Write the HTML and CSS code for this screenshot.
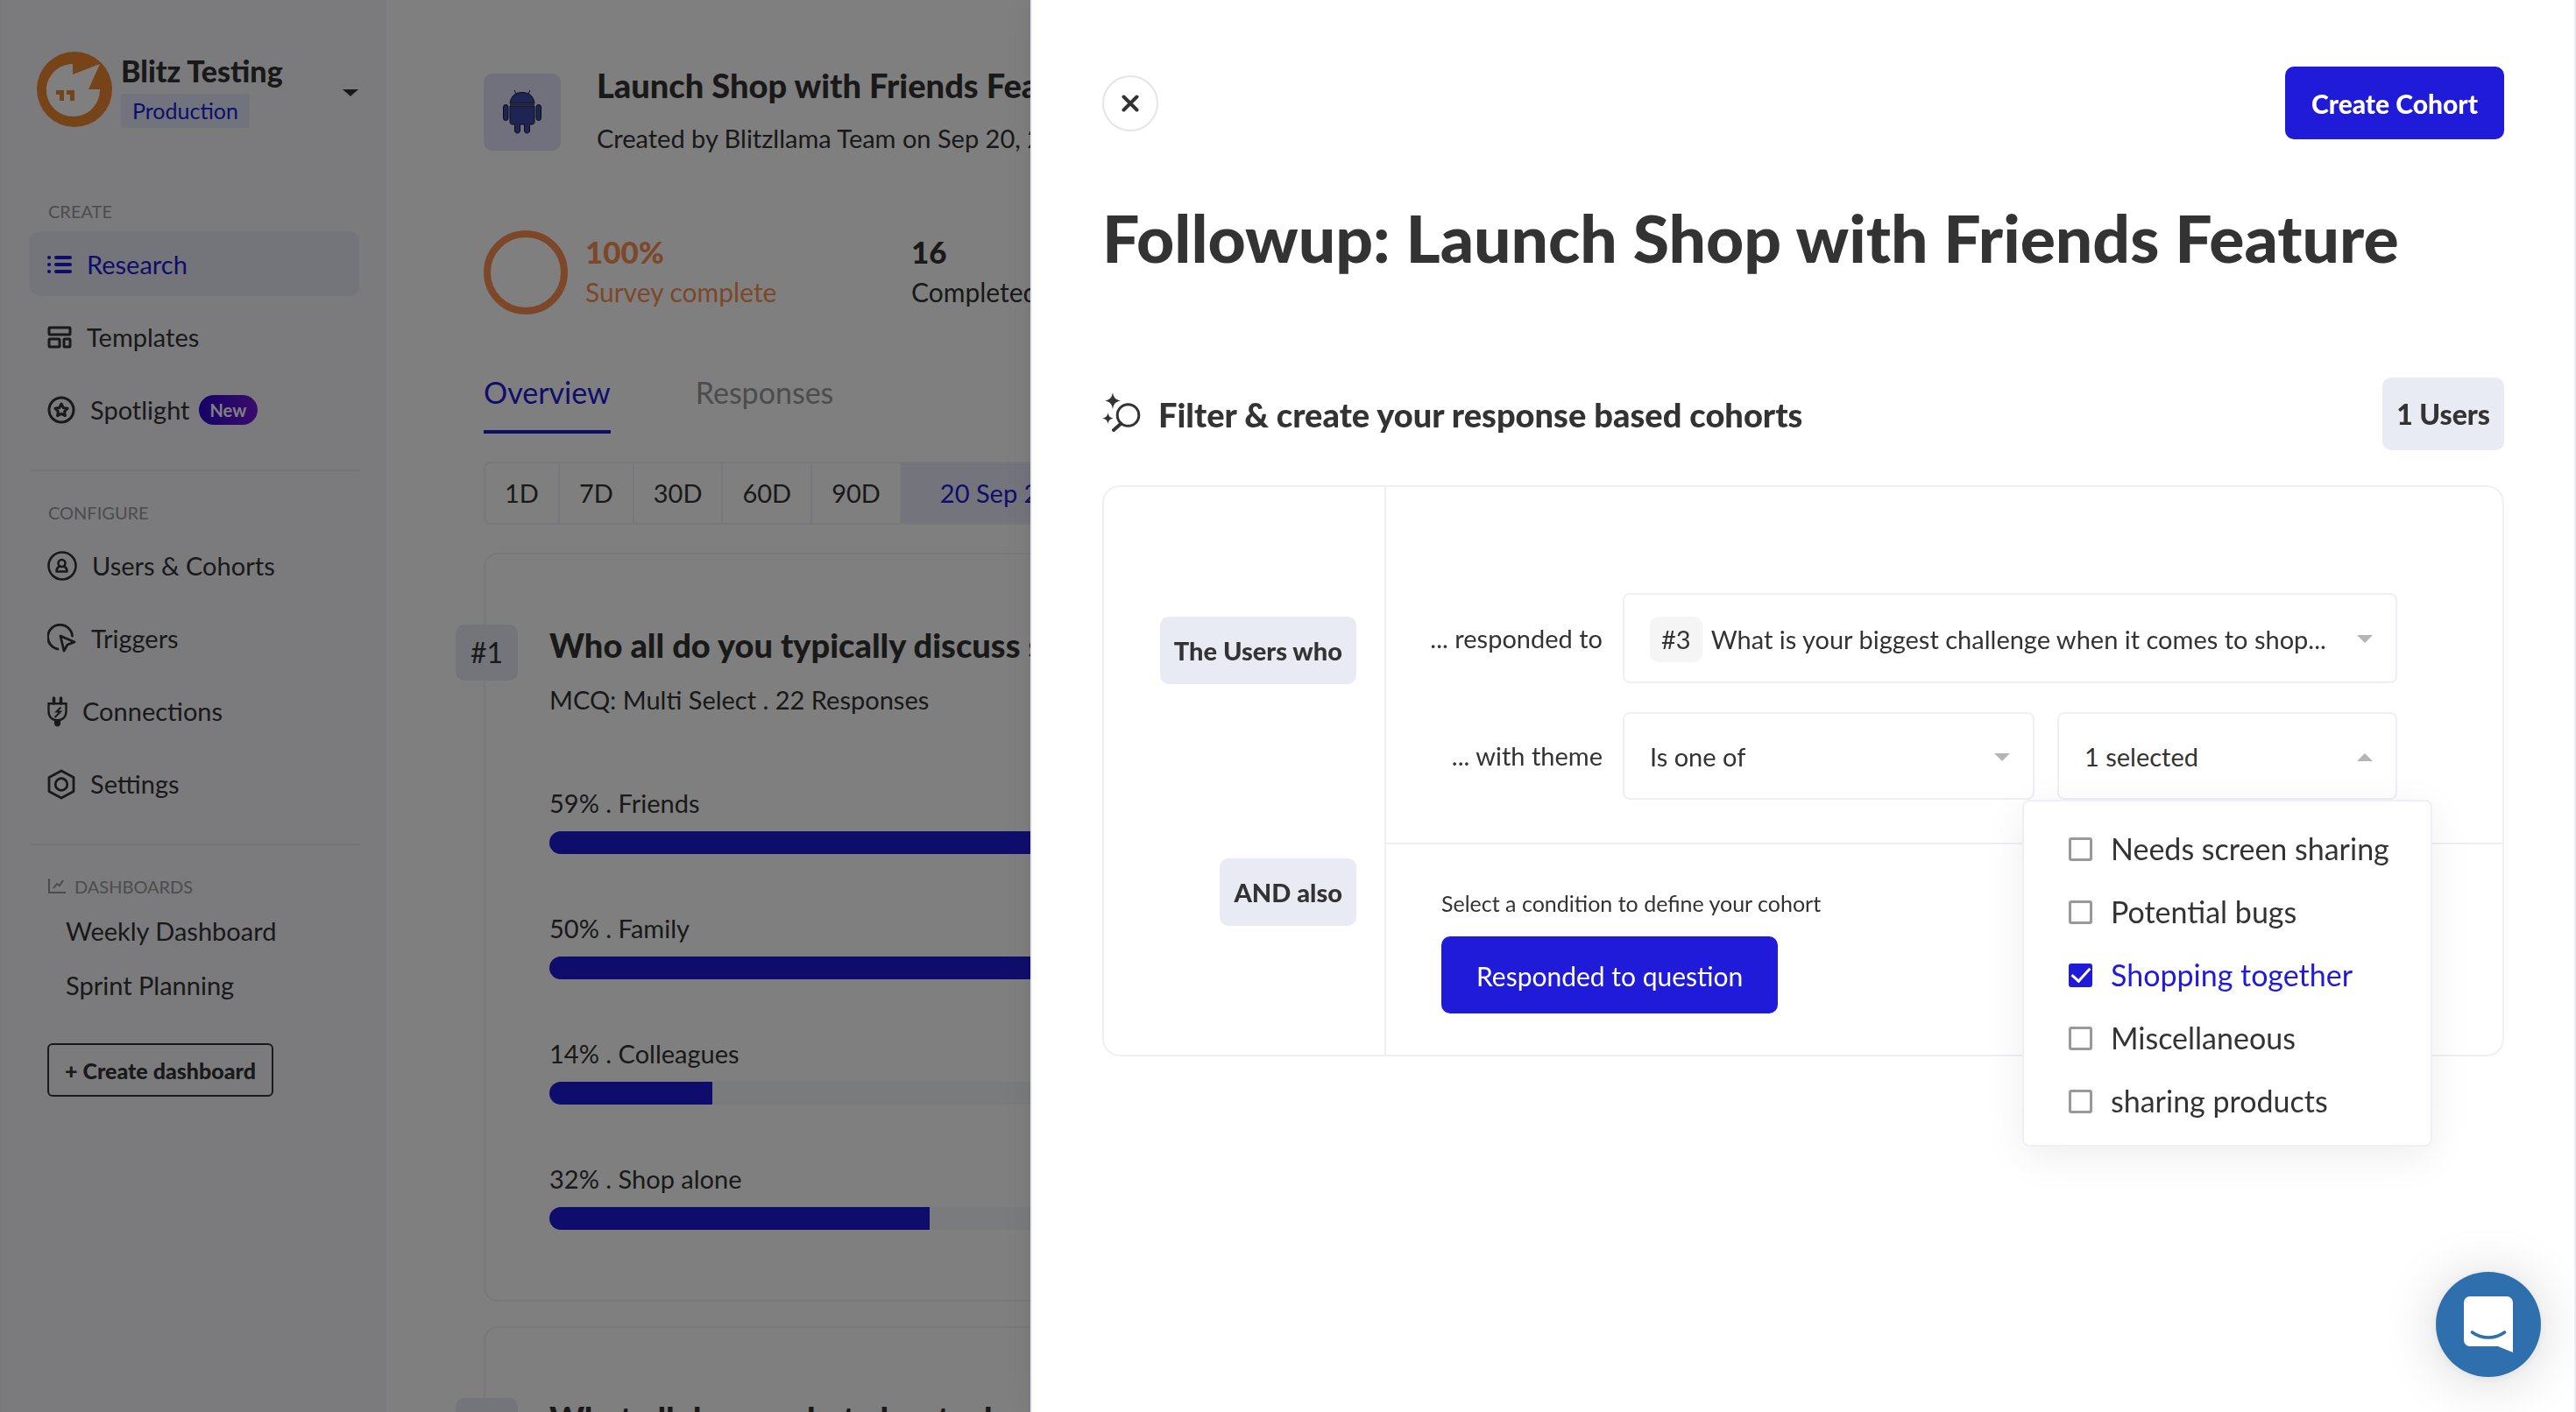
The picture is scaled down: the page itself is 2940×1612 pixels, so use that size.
FILE: index.html
```html
<!DOCTYPE html>
<html lang="en">
<head>
<meta charset="utf-8">
<title>Blitz Testing – Create Cohort</title>
<meta name="viewport" content="width=device-width, initial-scale=1">
<link rel="stylesheet" href="styles.css">
</head>
<body>
<div class="app">
  <nav class="sidebar" aria-label="Main">
    <div class="brand">
      <svg class="brand-logo" viewBox="0 0 86 86" aria-hidden="true">
        <circle cx="43" cy="43" r="43" fill="#ee8631"/>
        <path d="M41 14v12l31-12-13 29h13c0 17-13 31-30 31S11 61 11 44c0-16 13-30 30-30z" fill="#fff"/>
        <path d="M22 44h9v12h-5v-7h-4zM34 44h9v12h-5v-7h-4z" fill="#ee8631"/>
      </svg>
      <div class="brand-text">
        <span class="brand-name">Blitz Testing</span>
        <span class="brand-env">Production</span>
      </div>
      <button class="brand-toggle" type="button" aria-label="Switch workspace">
        <svg width="18" height="8" viewBox="0 0 18 8"><path d="M0 0h18L9 8z" fill="currentColor"/></svg>
      </button>
    </div>

    <h2 class="nav-heading">CREATE</h2>
    <ul class="nav-list">
      <li><a class="nav-item is-active" href="#">
        <svg width="28" height="24" viewBox="0 0 28 24" stroke="currentColor" stroke-width="4" stroke-linecap="round"><path d="M2 4h.1M2 12h.1M2 20h.1M10 4h16M10 12h16M10 20h16"/></svg>
        Research</a></li>
      <li><a class="nav-item" href="#">
        <svg width="28" height="26" viewBox="0 0 28 26" fill="none" stroke="currentColor" stroke-width="3"><rect x="2" y="2" width="24" height="8" rx="1"/><rect x="2" y="15" width="12" height="9" rx="1"/><rect x="19" y="15" width="7" height="9" rx="1"/></svg>
        Templates</a></li>
      <li><a class="nav-item" href="#">
        <svg width="32" height="32" viewBox="0 0 32 32" fill="none" stroke="currentColor" stroke-width="3" stroke-linejoin="round"><circle cx="16" cy="16" r="14"/><path d="M16 9l2.200 4.500 4.900.7-3.500 3.500.8 4.900-4.400-2.300-4.400 2.300.8-4.900-3.500-3.500 4.900-.7z"/></svg>
        Spotlight <span class="pill">New</span></a></li>
    </ul>

    <hr class="nav-rule">

    <h2 class="nav-heading">CONFIGURE</h2>
    <ul class="nav-list">
      <li><a class="nav-item" href="#">
        <svg width="34" height="34" viewBox="0 0 34 34" fill="none" stroke="currentColor" stroke-width="2.600" stroke-linejoin="round"><circle cx="17" cy="17" r="15.500"/><circle cx="16.500" cy="14" r="4"/><path d="M14 17.500c-2 1-3.500 3-3.500 6h12c0-3-1.500-5-3.500-6"/></svg>
        Users &amp; Cohorts</a></li>
      <li><a class="nav-item" href="#">
        <svg width="33" height="34" viewBox="0 0 33 34" fill="none" stroke="currentColor" stroke-width="2.800" stroke-linejoin="round" stroke-linecap="round"><path d="M12 29A14 14 0 1 1 28.500 14"/><path d="M15 14l16 7-8 3-4 7z"/></svg>
        Triggers</a></li>
      <li><a class="nav-item" href="#">
        <svg width="23" height="35" viewBox="0 0 23 35" fill="none" stroke="currentColor" stroke-width="2.400"><path d="M7.500 2v6M15.500 2v6" stroke-width="3.600" stroke-linecap="round"/><path d="M1.500 8.300h20v9c0 6-4 10-10 10s-10-4-10-10z"/><path d="M15.500 12.500l-5 5h4.500l-6.500 6.500" stroke-width="2"/><path d="M8 27h7v4c0 2-1.500 3.500-3.500 3.500S8 33 8 31z" fill="currentColor" stroke="none"/></svg>
        Connections</a></li>
      <li><a class="nav-item" href="#">
        <svg width="32" height="35" viewBox="0 0 32 35" fill="none" stroke="currentColor" stroke-width="2.800" stroke-linejoin="round"><path d="M16 2l14 7.500v16L16 33 2 25.500v-16z"/><circle cx="16" cy="17.500" r="6.800"/></svg>
        Settings</a></li>
    </ul>

    <hr class="nav-rule">

    <h2 class="nav-heading nav-heading-icon">
      <svg width="20" height="18" viewBox="0 0 20 18" fill="none" stroke="currentColor" stroke-width="2"><path d="M1 0v16h19M6 11l4-5 3 2 4-6"/></svg>
      DASHBOARDS</h2>
    <ul class="dash-list">
      <li><a href="#">Weekly Dashboard</a></li>
      <li><a href="#">Sprint Planning</a></li>
    </ul>
    <button class="dash-create" type="button">+ Create dashboard</button>
  </nav>

  <main class="main">
    <header class="survey-head">
      <div class="survey-tile">
        <svg width="44" height="50" viewBox="0 0 44 50" fill="#3c4aa6" stroke="#14182c" stroke-width="1" aria-hidden="true">
          <path d="M15 4l-2-4M29 4l2-4"/>
          <path d="M8 15C9 7 14 2.500 22 2.500S35 7 36 15z"/>
          <path d="M8 18h28v18c0 2-1 3-3 3h-2.500v7c0 4-6 4-6 0v-7h-5v7c0 4-6 4-6 0v-7H11c-2 0-3-1-3-3z"/>
          <path d="M8 16.500h28" stroke="#3a4068" stroke-width="2"/>
          <rect x=".5" y="16.500" width="5.500" height="18" rx="2.700"/><rect x="38" y="16.500" width="5.500" height="18" rx="2.700"/>
        </svg>
      </div>
      <div>
        <h1 class="survey-title">Launch Shop with Friends Feature</h1>
        <p class="survey-meta">Created by Blitzllama Team on Sep 20, 2022</p>
      </div>
    </header>

    <section class="stats">
      <div class="stat stat-rate">
        <span class="ring"></span>
        <div><p class="stat-value">100%</p><p class="stat-label">Survey complete</p></div>
      </div>
      <div class="stat"><p class="stat-value">16</p><p class="stat-label">Completed</p></div>
    </section>

    <div class="tabs">
      <a class="tab is-active" href="#">Overview</a>
      <a class="tab" href="#">Responses</a>
    </div>

    <div class="range">
      <button type="button">1D</button><button type="button">7D</button><button type="button">30D</button><button type="button">60D</button><button type="button">90D</button><button class="is-active" type="button">20 Sep 2022 - 20 Oct 2022</button>
    </div>

    <section class="question">
      <span class="question-no">#1</span>
      <h2 class="question-title">Who all do you typically discuss shopping with?</h2>
      <p class="question-meta">MCQ: Multi Select . 22 Responses</p>
      <ul class="bars">
        <li><span class="bar-label">59% . Friends</span><div class="bar"><div class="bar-fill" style="width:59%"></div></div></li>
        <li><span class="bar-label">50% . Family</span><div class="bar"><div class="bar-fill" style="width:50%"></div></div></li>
        <li><span class="bar-label">14% . Colleagues</span><div class="bar"><div class="bar-fill" style="width:13.7%"></div></div></li>
        <li><span class="bar-label">32% . Shop alone</span><div class="bar"><div class="bar-fill" style="width:32%"></div></div></li>
      </ul>
    </section>

    <section class="question">
      <span class="question-no">#2</span>
      <h2 class="question-title">What all do you chat about when shopping?</h2>
    </section>
  </main>
</div>

<div class="overlay"></div>

<aside class="drawer" role="dialog" aria-label="Create cohort">
  <div class="drawer-bar">
    <button class="close" type="button" aria-label="Close">
      <svg width="20" height="20" viewBox="0 0 20 20" stroke="currentColor" stroke-width="4" stroke-linecap="round"><path d="M2.500 2.500l15 15M17.500 2.500l-15 15"/></svg>
    </button>
    <button class="primary primary-strong" type="button">Create Cohort</button>
  </div>

  <h1 class="drawer-title">Followup: Launch Shop with Friends Feature</h1>

  <div class="filter-head">
    <svg width="44" height="50" viewBox="0 0 44 50" aria-hidden="true">
      <path d="M12 0c1 6 3 8 9 9.500-6 1.500-8 3.500-9 9.500-1-6-3-8-9-9.500C9 8 11 6 12 0z" fill="#333"/>
      <path d="M6.500 23c.7 4 2 5.500 6 6.500-4 1-5.300 2.500-6 6.500-.7-4-2-5.500-6-6.500 4-1 5.300-2.500 6-6.500z" fill="#333"/>
      <circle cx="29.500" cy="26" r="12.300" fill="none" stroke="#333" stroke-width="3"/>
      <path d="M21.500 35.500L13 43" stroke="#333" stroke-width="4" stroke-linecap="round"/>
    </svg>
    <h2 class="filter-title">Filter &amp; create your response based cohorts</h2>
    <span class="tag tag-count">1 Users</span>
  </div>

  <section class="builder">
    <div class="builder-side builder-side-first"><span class="tag">The Users who</span></div>
    <div class="builder-rules">
      <label class="rule-label" for="question">... responded to</label>
      <div class="field">
        <span class="chip">#3</span>
        <select id="question"><option>What is your biggest challenge when it comes to shop...</option></select>
        <svg class="caret" width="18" height="9" viewBox="0 0 18 9"><path d="M0 0h18L9 9z"/></svg>
      </div>
      <label class="rule-label" for="operator">... with theme</label>
      <div class="rule-pair">
        <div class="field">
          <select id="operator"><option>Is one of</option></select>
          <svg class="caret" width="18" height="9" viewBox="0 0 18 9"><path d="M0 0h18L9 9z"/></svg>
        </div>
        <div class="picker">
          <button class="field" type="button" aria-haspopup="true" aria-expanded="true">
            <span>1 selected</span>
            <svg class="caret" width="18" height="9" viewBox="0 0 18 9"><path d="M0 9h18L9 0z"/></svg>
          </button>
          <div class="menu">
            <label class="option"><input type="checkbox">Needs screen sharing</label>
            <label class="option"><input type="checkbox">Potential bugs</label>
            <label class="option"><input type="checkbox" checked>Shopping together</label>
            <label class="option"><input type="checkbox">Miscellaneous</label>
            <label class="option"><input type="checkbox">sharing products</label>
          </div>
        </div>
      </div>
    </div>
    <div class="builder-side"><span class="tag">AND also</span></div>
    <div class="builder-next">
      <p>Select a condition to define your cohort</p>
      <button class="primary" type="button">Responded to question</button>
    </div>
  </section>
</aside>

<button class="chat" type="button" aria-label="Open chat">
  <svg width="56" height="64" viewBox="0 0 56 64"><path d="M7 0h42a7 7 0 0 1 7 7v57l-17-7H7a7 7 0 0 1-7-7V7a7 7 0 0 1 7-7z" fill="#fff"/><path d="M9.500 41c11 8 26 8 37 0" fill="none" stroke="#2f6fae" stroke-width="3.600" stroke-linecap="round"/></svg>
</button>
</body>
</html>
```
FILE: styles.css
```css
:root {
  --ink: #333;
  --muted: #999;
  --blue: #1f1bd8;
  --lavender: #e8eaf4;
  --line: #efeff8;
  --orange: #fa9052;
}

* { box-sizing: border-box; }

body {
  margin: 0;
  height: 100vh;
  overflow: hidden;
  font-family: Lato, "Open Sans", sans-serif;
  font-size: 29px;
  line-height: 36px;
  color: var(--ink);
  background: #fff;
}

h1, h2, p, ul { margin: 0; padding: 0; }
ul { list-style: none; }
a { color: inherit; text-decoration: none; }
button, select, input { font: inherit; color: inherit; margin: 0; }
button { border: 0; background: none; padding: 0; }
svg { display: block; flex: none; }

.app { display: flex; height: 100vh; overflow: hidden; }

/* Sidebar */
.sidebar {
  flex: none;
  width: 15%;
  padding: 58px 31px 0 32px;
  border-left: 2px solid #f1f2f7;
  background: #f6f7fb;
}
.brand { display: flex; align-items: center; height: 88px; margin: 0 0 83px 8px; }
.brand-logo { width: 86px; height: 86px; }
.brand-text { flex: 1; padding-left: 10px; }
.brand-name { display: block; margin-bottom: 4px; font-size: 34px; line-height: 44px; font-weight: 900; }
.brand-env {
  display: inline-block;
  padding: 2px 13px;
  border-radius: 4px;
  background: #e2e6fa;
  color: var(--blue);
  font-size: 25px;
  line-height: 35px;
  vertical-align: top;
}
.brand-toggle { padding: 8px 1px 0 0; }
.nav-heading { margin: 0 0 11px 21px; font-size: 20px; line-height: 24px; font-weight: 400; color: var(--muted); }
.nav-heading-icon { display: flex; align-items: center; gap: 10px; margin-bottom: 8px; }
.nav-list { display: flex; flex-direction: column; gap: 9px; }
.nav-item { display: flex; align-items: center; gap: 17px; height: 74px; padding: 2px 0 0 20px; border-radius: 12px; }
.nav-item.is-active { background: var(--lavender); color: var(--blue); }
.pill {
  margin-left: -7px;
  padding: 0 13px;
  border-radius: 17px;
  background: linear-gradient(90deg, #2a06d0, #7417d8);
  color: #fff;
  font-size: 20px;
  line-height: 34px;
  font-weight: 700;
}
.nav-rule { height: 2px; margin: 32px 0 35px; border: 0; background: #e6e9f2; }
.dash-list { margin-left: 41px; line-height: 62px; }
.dash-create {
  height: 61px;
  margin: 35px 0 0 20px;
  padding: 0 18px;
  border: 2px solid var(--ink);
  border-radius: 6px;
  font-size: 25px;
  font-weight: 900;
}

/* Survey report */
.main { flex: 1; min-width: 0; padding: 75px 30% 0 111px; }
.survey-head { display: flex; gap: 41px; margin-bottom: 87px; }
.survey-tile {
  display: grid;
  place-items: center;
  width: 88px;
  height: 88px;
  margin-top: 9px;
  border-radius: 10px;
  background: #e0e2fb;
}
.survey-title, .question-title, .filter-title { font-size: 38px; line-height: 44px; font-weight: 900; }
.survey-title { margin-bottom: 21px; }
.stats { display: flex; }
.stat-rate { display: flex; gap: 20px; width: 488px; color: var(--orange); }
.ring { width: 96px; height: 96px; border: 8px solid var(--orange); border-radius: 50%; }
.stat-value { margin: 2px 0 6px; font-size: 35px; line-height: 44px; font-weight: 900; }
.stat-label { font-size: 30px; }
.tabs { display: flex; gap: 97px; margin: 69px 0 32px; font-size: 34px; line-height: 40px; }
.tab { padding-bottom: 23px; border-bottom: 4px solid transparent; color: var(--muted); }
.tab.is-active { color: var(--blue); border-color: var(--blue); }
.range { display: flex; width: fit-content; height: 72px; margin-bottom: 32px; border: 2px solid var(--line); border-radius: 8px; overflow: hidden; }
.range button { padding: 0 22px; border-right: 2px solid var(--line); }
.range .is-active { padding: 0 44px; border: 0; background: #e9e8fa; color: var(--blue); }
.question { position: relative; margin-top: 28px; padding: 81px 73px 80px; border: 2px solid var(--line); border-radius: 16px; }
.question-no {
  position: absolute;
  left: -34px;
  top: 80px;
  padding: 0 17px;
  border-radius: 10px;
  background: var(--lavender);
  font-size: 32px;
  line-height: 64px;
}
.question-meta { margin: 23px 0 82px; }
.bars { display: flex; flex-direction: column; gap: 67px; }
.bar-label { display: block; margin-bottom: 14px; }
.bar { height: 26px; border-radius: 13px; background: #f5f6fa; overflow: hidden; }
.bar-fill { height: 100%; background: var(--blue); }

/* Drawer */
.overlay { position: fixed; inset: 0; background: rgba(0, 0, 0, .5); }
.drawer {
  position: fixed;
  top: 0;
  right: 0;
  bottom: 0;
  width: 60%;
  padding: 76px 80px 0;
  border: solid #ebebf6;
  border-width: 0 2px;
  background: #fff;
  box-shadow: 0 0 40px rgba(0, 0, 0, .08);
}
.drawer-bar { display: flex; align-items: center; justify-content: space-between; }
.close { display: grid; place-items: center; width: 64px; height: 64px; border: 2px solid #e5e5e5; border-radius: 50%; }
.primary { height: 88px; padding: 2px 40px 0; border-radius: 10px; background: var(--blue); color: #fff; font-size: 30px; }
.primary-strong { height: 83px; padding: 0 30px; font-weight: 900; }
.drawer-title { margin: 70px 0 118px; font-size: 75px; line-height: 84px; font-weight: 900; }
.filter-head { display: flex; align-items: center; margin-bottom: 40px; }
.filter-title { flex: 1; padding-left: 20px; }
.tag { padding: 0 16px; border-radius: 10px; background: var(--lavender); line-height: 77px; font-weight: 900; }
.tag-count { font-size: 32px; line-height: 83px; }

.builder {
  display: grid;
  grid-template-columns: 322px minmax(0, 1fr);
  border: 2px solid var(--line);
  border-radius: 20px;
}
.builder-side { display: flex; justify-content: flex-end; align-items: flex-start; padding: 16px 32px 0 0; border-right: 2px solid var(--line); }
.builder-side-first { padding-top: 148px; }
.builder-rules {
  display: grid;
  grid-template-columns: 247px minmax(0, 1fr);
  grid-template-rows: 103px 100px;
  gap: 33px 23px;
  padding: 121px 120px 49px 0;
  border-bottom: 2px solid var(--line);
}
.rule-label { align-self: center; text-align: right; }
.rule-pair { display: grid; grid-template-columns: 470fr 388fr; gap: 26px; }
.field {
  display: flex;
  align-items: center;
  width: 100%;
  height: 100%;
  padding: 2px 26px 0 29px;
  border: 2px solid var(--line);
  border-radius: 8px;
  background: #fff;
}
.field select { flex: 1; min-width: 0; appearance: none; border: 0; padding: 0; background: none; text-overflow: ellipsis; }
.field span:not(.chip) { flex: 1; text-align: left; }
.chip { margin-right: 10px; padding: 0 13px; border-radius: 10px; background: #f5f5f5; line-height: 52px; }
.caret { fill: #b5b5b5; }
.picker { position: relative; }
.menu {
  position: absolute;
  top: 100%;
  right: -40px;
  width: 468px;
  padding: 18px 0 14px 51px;
  border: 2px solid var(--line);
  border-radius: 8px;
  background: #fff;
  box-shadow: 0 12px 48px rgba(0, 0, 0, .07);
  z-index: 1;
}
.option { display: flex; align-items: center; gap: 21px; height: 72px; font-size: 34px; white-space: nowrap; }
.option input { display: grid; place-items: center; flex: none; appearance: none; width: 27px; height: 27px; border: 3px solid var(--muted); border-radius: 3px; background: #fff; }
.option input:checked { border-color: var(--blue); background: var(--blue); }
.option input:checked::after { content: ""; width: 9px; height: 18px; margin-top: -6px; border: solid #fff; border-width: 0 3px 3px 0; transform: rotate(42deg); }
.option:has(:checked) { color: var(--blue); }
.builder-next { padding: 51px 63px 47px; }
.builder-next p { margin-bottom: 22px; font-size: 25px; line-height: 32px; }

.chat {
  position: fixed;
  right: 40px;
  bottom: 40px;
  display: grid;
  place-items: center;
  width: 120px;
  height: 120px;
  border-radius: 50%;
  background: #2f6fae;
  box-shadow: 0 2px 12px rgba(0, 0, 0, .06), 0 4px 64px rgba(0, 0, 0, .16);
}
```
